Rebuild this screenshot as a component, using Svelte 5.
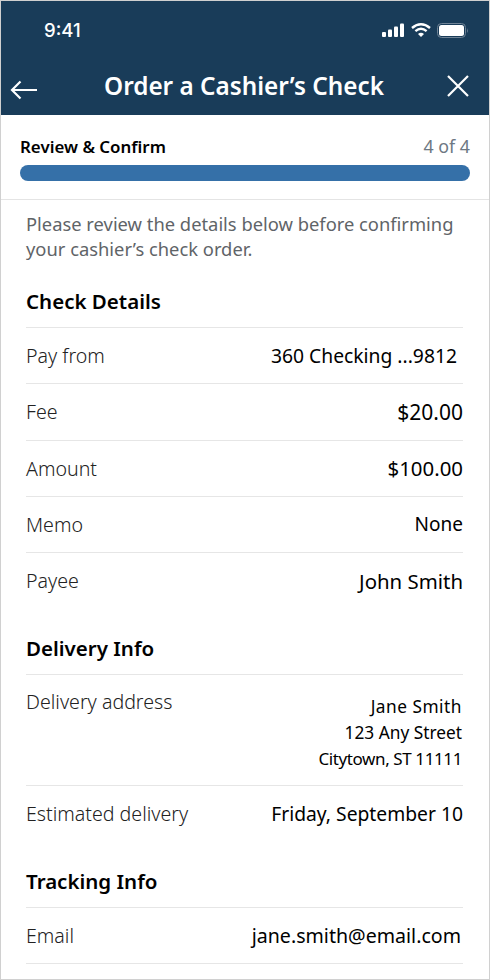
<script>
//rows of the review screen
let checkRows = [
    { label: "Pay from", value: "360 Checking ...9812", cls: "payfrom" },
    { label: "Fee", value: "$20.00", cls: "fee" },
    { label: "Amount", value: "$100.00", cls: "money" },
    { label: "Memo", value: "None", cls: "memo" },
    { label: "Payee", value: "John Smith", cls: "money" }
]
</script>

<div class="frame">
    <header class="header">
        <div class="status">
            <span class="time">9:41</span>
            <div class="status_icons">
                <svg width="23" height="14" viewBox="0 0 23 14">
                    <rect x="0" y="9" width="4" height="5" rx="1" fill="#fff"/>
                    <rect x="6" y="6.5" width="4" height="7.5" rx="1" fill="#fff"/>
                    <rect x="12" y="3.5" width="4" height="10.5" rx="1" fill="#fff"/>
                    <rect x="18" y="0.5" width="4" height="13.5" rx="1" fill="#fff"/>
                </svg>
                <svg width="20" height="14" viewBox="0 0 20 14">
                    <path d="M1 5 Q10 -2.5 19 5" fill="none" stroke="#fff" stroke-width="2.4"/>
                    <path d="M4.4 8.2 Q10 3.4 15.6 8.2" fill="none" stroke="#fff" stroke-width="2.4"/>
                    <path d="M7 11 L10 14 L13 11 Q10 8.6 7 11 Z" fill="#fff"/>
                </svg>
                <svg width="32" height="15" viewBox="0 0 32 15">
                    <rect x="0.5" y="0.5" width="28" height="14" rx="4" fill="none" stroke="#6f8396"/>
                    <rect x="2" y="2" width="25" height="11" rx="2.5" fill="#fff"/>
                    <path d="M30 5 Q31.6 7.5 30 10 Z" fill="#6f8396"/>
                </svg>
            </div>
        </div>
        <div class="navbar">
            <svg class="back_icon" width="32" height="24" viewBox="0 0 32 24">
                <path d="M27 12 H2 M10.5 3.5 L2 12 L10.5 20.5" fill="none" stroke="#fff" stroke-width="2.2"/>
            </svg>
            <h1 class="title">Order a Cashier’s Check</h1>
            <svg width="24" height="24" viewBox="0 0 24 24">
                <path d="M2 2 L22 22 M22 2 L2 22" fill="none" stroke="#fff" stroke-width="2.2"/>
            </svg>
        </div>
    </header>

    <div class="progress">
        <div class="progress_top">
            <span class="step">Review &amp; Confirm</span>
            <span class="count">4 of 4</span>
        </div>
        <div class="bar"></div>
    </div>

    <main class="content">
        <p class="intro">Please review the details below before confirming your cashier’s check order.</p>

        <h2 class="section_title first">Check Details</h2>
        {#each checkRows as row, i}
            <div class="row" class:no_line={i === 0}>
                <span class="label">{row.label}</span>
                <span class="value {row.cls}">{row.value}</span>
            </div>
        {/each}

        <h2 class="section_title">Delivery Info</h2>
        <div class="row address_row no_line">
            <span class="label">Delivery address</span>
            <span class="address">
                <span class="addr_name">Jane Smith</span><br />
                123 Any Street<br />
                <span class="addr_city">Citytown, ST 11111</span>
            </span>
        </div>
        <div class="row">
            <span class="label">Estimated delivery</span>
            <span class="value">Friday, September 10</span>
        </div>

        <h2 class="section_title">Tracking Info</h2>
        <div class="row no_line">
            <span class="label">Email</span>
            <span class="value email">jane.smith@email.com</span>
        </div>
        <div class="end_line"></div>
    </main>
</div>

<style>
    :global(body) {
        margin: 0;
        background: #fff;
    }

    .frame {
        width: 490px;
        height: 980px;
        box-sizing: border-box;
        border: 1px solid #d0d0d0;
        overflow: hidden;
        font-family: "Noto Sans", "Open Sans", sans-serif;
        color: #000;
    }

    .header {
        background-color: #193c59;
        height: 114px;
        color: #fff;
    }

    .status {
        display: flex;
        justify-content: space-between;
        align-items: center;
        padding: 16px 20px 0 43px;
        height: 26px;
    }

    .time {
        font-family: Inter, sans-serif;
        font-size: 18.5px;
        font-weight: 500;
    }

    .status_icons {
        display: flex;
        align-items: center;
        gap: 6px;
    }

    .navbar {
        display: flex;
        justify-content: space-between;
        align-items: center;
        padding: 26px 19px 0 9px;
    }

    .back_icon {
        margin-top: 9px;
    }

    .title {
        margin: 0;
        font-size: 24.3px;
        font-weight: 600;
        line-height: 32px;
    }

    .progress {
        padding: 17px 19px 18px 19px;
        border-bottom: 1px solid #e4e4e4;
    }

    .progress_top {
        display: flex;
        justify-content: space-between;
        align-items: center;
        height: 28px;
    }

    .step {
        font-size: 16.9px;
        font-weight: 600;
    }

    .count {
        font-size: 17.8px;
        color: #6d7883;
    }

    .bar {
        height: 16px;
        margin-top: 5px;
        border-radius: 8px;
        background-color: #3570a8;
    }

    .content {
        padding: 0 26px 0 25px;
    }

    .intro {
        margin: 11px 0 0 0;
        font-size: 18.35px;
        line-height: 25px;
        color: #5f6468;
    }

    .section_title {
        margin: 0;
        padding: 25.5px 0 12.5px 0;
        font-size: 20.5px;
        font-weight: 600;
        line-height: 28px;
        border-bottom: 1px solid #e6e6e6;
    }

    .row {
        display: flex;
        justify-content: space-between;
        align-items: center;
        height: 55.25px;
        border-top: 1px solid #e6e6e6;
    }

    .row.no_line {
        border-top: none;
    }

    .address_row {
        align-items: flex-start;
        height: 109.5px;
    }

    .end_line {
        border-top: 1px solid #e6e6e6;
    }

    .label {
        font-size: 19.6px;
        font-weight: 300;
        color: #222;
        line-height: 53px;
    }

    .address_row .label {
        line-height: 26px;
        padding-top: 14px;
    }

    .value {
        font-size: 19.3px;
    }

    .fee {
        font-size: 21px;
    }

    .money {
        font-size: 20.4px;
    }

    .memo {
        font-size: 19px;
    }

    .payfrom {
        padding-right: 6px;
    }

    .email {
        font-size: 19.6px;
        padding-right: 2px;
    }

    .address {
        font-size: 17.3px;
        line-height: 26px;
        text-align: right;
        padding: 19px 1px 0 0;
    }

    .addr_name {
        letter-spacing: 0.5px;
    }

    .addr_city {
        font-size: 17px;
        letter-spacing: -0.4px;
    }
</style>
